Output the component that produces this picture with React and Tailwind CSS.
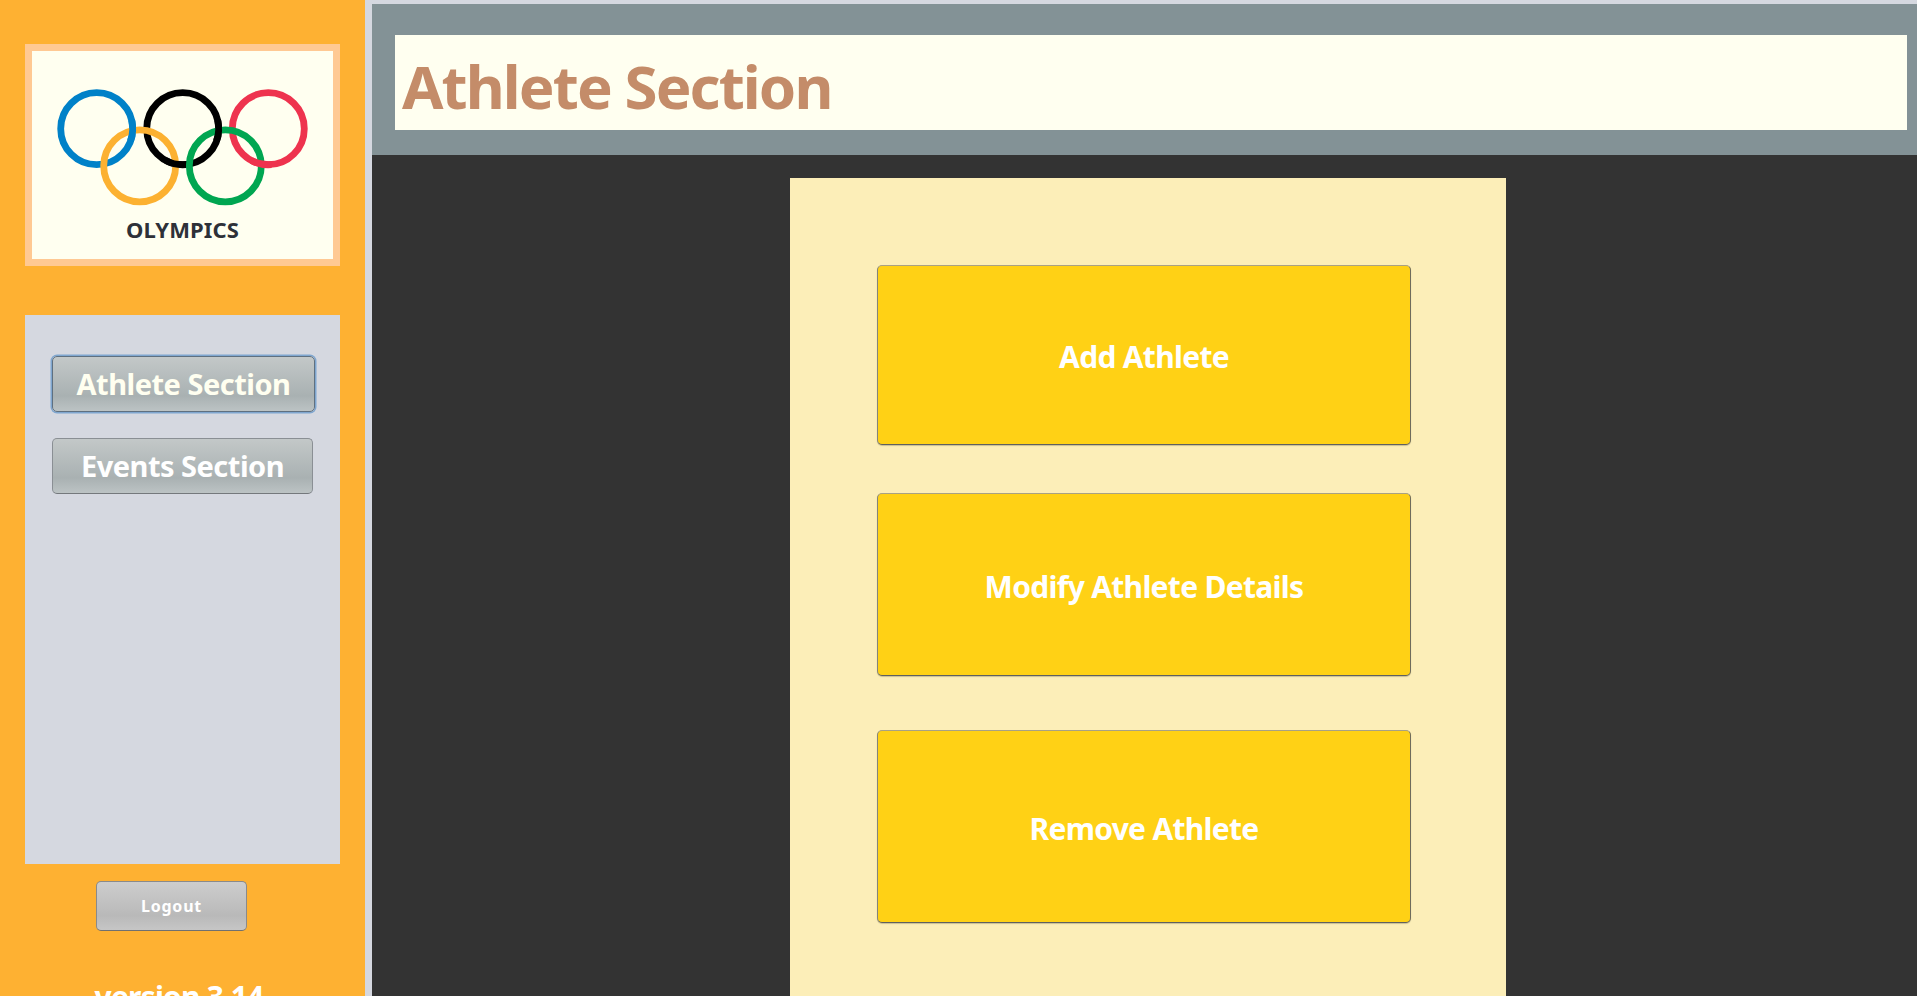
const font = "font-['Noto_Sans',sans-serif]"

function Rings() {
  const rings = [
    { cx: 96.7, cy: 128.7, color: '#0081C8' },
    { cx: 182.7, cy: 128.7, color: '#000000' },
    { cx: 268.3, cy: 128.7, color: '#EE334E' },
    { cx: 139.7, cy: 165.8, color: '#FCB131' },
    { cx: 225.3, cy: 165.8, color: '#00A651' },
  ]
  return (
    <svg viewBox="32 51 301 160" className="block h-[160px] w-[301px] shrink-0">
      {rings.map((r) => (
        <circle key={r.color} cx={r.cx} cy={r.cy} r="36" fill="none" stroke={r.color} strokeWidth="6.8" />
      ))}
      {/* interlock: these arcs go back over the lower rings */}
      <path d="M 131.6 120 A 36 36 0 0 1 130.5 141" fill="none" stroke="#0081C8" strokeWidth="6.8" />
      <path d="M 185.8 164.6 A 36 36 0 0 1 165.8 160.5" fill="none" stroke="#000000" strokeWidth="6.8" />
      <path d="M 217.6 120 A 36 36 0 0 1 216.5 141" fill="none" stroke="#000000" strokeWidth="6.8" />
      <path d="M 271.4 164.6 A 36 36 0 0 1 251.4 160.5" fill="none" stroke="#EE334E" strokeWidth="6.8" />
    </svg>
  )
}

function SideButton({ label, className }) {
  return (
    <button
      className={`flex shrink-0 items-center justify-center rounded-[5px] border-[1.5px] bg-[linear-gradient(#c3c8c8,#a9b1b2_72%,#bcc3c4)] text-[29px] font-bold tracking-[-0.5px] ${className}`}
    >
      {label}
    </button>
  )
}

function ActionButton({ label, className }) {
  return (
    <button
      className={`flex w-full shrink-0 items-center justify-center rounded-[5px] border border-t-[#a8a184] border-l-[#85847a] border-r-[#6f6c5c] border-b-[#5f6060] bg-[#ffd115] pt-[3px] text-[30px] font-bold tracking-[-0.7px] text-white shadow-[0_1px_1px_rgba(0,0,0,0.2)] ${className}`}
    >
      {label}
    </button>
  )
}

export default function App() {
  return (
    <div className={`flex h-screen w-full overflow-hidden bg-[#d5d8e0] ${font}`}>
      <aside className="flex w-[365px] shrink-0 flex-col overflow-hidden bg-[#feb132] px-[25px] pt-[44px]">
        <div className="flex h-[222px] shrink-0 flex-col items-center border-[7px] border-[#ffc993] bg-[#fffff0]">
          <Rings />
          <p className="mt-[3px] text-[22px] font-bold leading-[30px] tracking-[0.1px] text-[#2e3138]">OLYMPICS</p>
        </div>

        <nav className="mt-[49px] flex h-[549px] shrink-0 flex-col bg-[#d5d8e0] pl-[27px] pt-[41px]">
          <SideButton
            label="Athlete Section"
            className="h-[56px] w-[263px] border-[#5f7080] text-[#fffff0] shadow-[0_0_0_1.5px_#7fa6cf]"
          />
          <SideButton
            label="Events Section"
            className="mt-[26px] h-[56px] w-[261px] border-[#8a8f94] border-b-[#74787c] text-white"
          />
        </nav>

        <button className="ml-[71px] mt-[17px] flex h-[50px] w-[151px] shrink-0 items-center justify-center rounded-[5px] border-[1.5px] border-[#8a8a8a] border-b-[#707070] bg-[linear-gradient(#cdcdcd,#b9b9b9_70%,#c6c6c6)] text-[16px] font-bold tracking-[0.8px] text-white">
          Logout
        </button>

        <p className="mt-[46px] shrink-0 pr-[7px] text-center text-[30px] font-bold leading-[40px] tracking-[-0.8px] text-white">version 3.14</p>
      </aside>

      <div className="w-[7px] shrink-0 bg-[#d5d8e0]" />

      <main className="flex min-w-0 flex-1 flex-col pt-[4px]">
        <header className="h-[151px] shrink-0 bg-[#839296] pb-[25px] pl-[23px] pr-[10px] pt-[31px]">
          <div className="flex h-[95px] items-center bg-[#fffff0] pl-[7px] pt-[6px]">
            <h1 className="text-[60px] font-bold leading-none tracking-[-1.9px] text-[#c48c69]">Athlete Section</h1>
          </div>
        </header>

        <section className="flex-1 bg-[#333333] pl-[418px] pt-[23px]">
          <div className="h-full w-[716px] bg-[#fceeb8] pl-[87px] pt-[87px]">
            <div className="flex w-[534px] flex-col">
              <ActionButton label="Add Athlete" className="h-[180px]" />
              <ActionButton label="Modify Athlete Details" className="mt-[48px] h-[183px]" />
              <ActionButton label="Remove Athlete" className="mt-[54px] h-[193px]" />
            </div>
          </div>
        </section>
      </main>
    </div>
  )
}
